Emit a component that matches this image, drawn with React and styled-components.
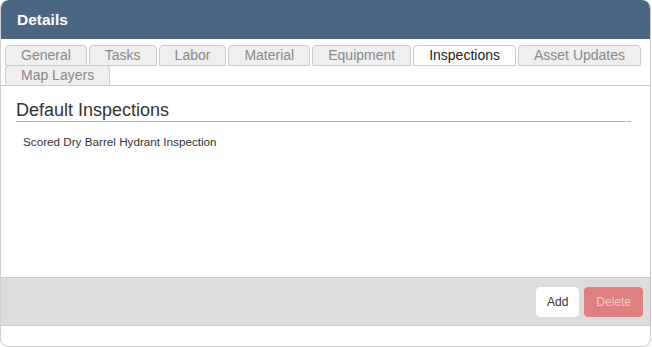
import React, { useState } from 'react';
import styled, { createGlobalStyle } from 'styled-components';

const GlobalStyle = createGlobalStyle`
  html, body {
    margin: 0;
    padding: 0;
    background: #fff;
  }
  body {
    font-family: "Liberation Sans", Arial, sans-serif;
  }
`;

const TABS = [
  'General',
  'Tasks',
  'Labor',
  'Material',
  'Equipment',
  'Inspections',
  'Asset Updates',
  'Map Layers',
];

const Panel = styled.div`
  box-sizing: border-box;
  width: 651px;
  height: 347px;
  display: flex;
  flex-direction: column;
  border: 1px solid #cfcfcf;
  border-top: none;
  border-radius: 8px;
  overflow: hidden;
  background: #fff;
`;

const Header = styled.div`
  height: 39px;
  flex: none;
  display: flex;
  align-items: center;
  padding: 0 16px;
  background: #4b6683;
  color: #fff;
  font-size: 15.5px;
  font-weight: bold;
  border-radius: 8px 8px 0 0;
`;

const TabBar = styled.div`
  flex: none;
  display: flex;
  flex-wrap: wrap;
  column-gap: 2px;
  padding: 6px 4px 0 4px;
  border-bottom: 1px solid #c8c8c8;
`;

const Tab = styled.button`
  box-sizing: border-box;
  height: 21px;
  margin-bottom: -1px;
  padding: 0 15px;
  border: 1px solid #cbcbcb;
  border-radius: 4px 4px 0 0;
  background: ${p => (p.$active ? '#fff' : '#efefef')};
  color: ${p => (p.$active ? '#222' : '#8a8a8a')};
  font-family: inherit;
  font-size: 14px;
  line-height: 19px;
  cursor: pointer;
`;

const Content = styled.div`
  flex: 1;
  padding: 14px 19px 0 15px;
`;

const Title = styled.h2`
  margin: 0;
  padding-bottom: 1px;
  border-bottom: 1px solid #b5b5b5;
  font-size: 18px;
  font-weight: normal;
  line-height: 20px;
  color: #333;
`;

const Item = styled.div`
  margin-top: 13px;
  padding-left: 7px;
  font-size: 11.7px;
  color: #333;
`;

const Footer = styled.div`
  flex: none;
  height: 47px;
  display: flex;
  align-items: center;
  justify-content: flex-end;
  gap: 5px;
  padding: 0 7px;
  background: #dcdcdc;
  border-top: 1px solid #cbcbcb;
  border-bottom: 1px solid #cbcbcb;
  margin-bottom: 20px;
`;

const Button = styled.button`
  box-sizing: border-box;
  height: 30px;
  padding: 0 ${p => (p.$danger ? '11px' : '10px')};
  border: 1px solid ${p => (p.$danger ? '#dc8080' : '#fff')};
  border-radius: 4px;
  background: ${p => (p.$danger ? '#dc8080' : '#fff')};
  color: ${p => (p.$danger ? '#f6c9c9' : '#333')};
  font-family: inherit;
  font-size: 12px;
  cursor: pointer;
`;

export default function App() {
  const [active, setActive] = useState('Inspections');

  return (
    <>
      <GlobalStyle />
      <Panel>
        <Header>Details</Header>
        <TabBar>
          {TABS.map(t => (
            <Tab key={t} $active={t === active} onClick={() => setActive(t)}>
              {t}
            </Tab>
          ))}
        </TabBar>
        <Content>
          <Title>Default Inspections</Title>
          <Item>Scored Dry Barrel Hydrant Inspection</Item>
        </Content>
        <Footer>
          <Button>Add</Button>
          <Button $danger disabled>Delete</Button>
        </Footer>
      </Panel>
    </>
  );
}
